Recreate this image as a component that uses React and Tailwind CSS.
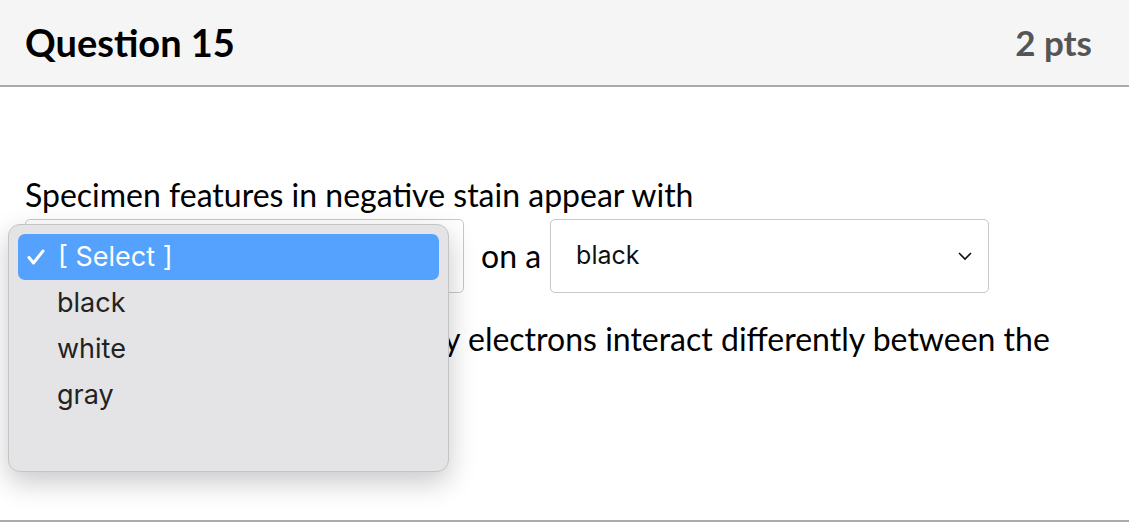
const lato = { fontFamily: '"Lato", "Open Sans", sans-serif' };
const sys = { fontFamily: '"Inter", "Liberation Sans", sans-serif' };

function Chevron() {
    return (
        <svg width="14" height="9" viewBox="0 0 14 9" fill="none">
            <path d="M1 1l6 6 6-6" stroke="#111" strokeWidth="1.6" />
        </svg>
    );
}

function FakeSelect({ value }) {
    return (
        <div className="w-[439px] h-[74px] border border-[#c8c8c8] rounded-[5px] bg-white flex items-center justify-between pl-[25px] pr-[16px]">
            <span className="text-[25px] text-[#111]" style={sys}>{value}</span>
            <Chevron />
        </div>
    );
}

function Popup() {
    const items = ["black", "white", "gray"];
    return (
        <div
            className="absolute left-[8px] top-[224px] w-[441px] h-[248px] bg-[#e4e4e6] border border-[#c4c4c6] rounded-[12px] shadow-[0_10px_28px_rgba(0,0,0,0.22)] p-[9px]"
            style={sys}
        >
            <div className="h-[46px] rounded-[7px] bg-[#54a2fd] flex items-center text-white text-[27px] pl-[9px]">
                <svg className="mr-[13px]" width="18" height="16" viewBox="0 0 18 16" fill="none">
                    <path d="M2 8.5l4.5 5.5L16 2" stroke="white" strokeWidth="3" strokeLinecap="round" strokeLinejoin="round" />
                </svg>
                <span>[ Select ]</span>
            </div>
            {items.map((item) => (
                <div key={item} className="h-[46px] flex items-center pl-[39px] text-[27px] text-[#222]">
                    {item}
                </div>
            ))}
        </div>
    );
}

export default function App() {
    return (
        <div className="relative w-[1129px] h-[526px] bg-white overflow-hidden" style={lato}>
            <div className="h-[87px] bg-[#f5f5f5] border-b-2 border-[#aaaaaa] flex items-center justify-between pl-[25px] pr-[37px]">
                <h2 className="text-[38px] font-bold text-black">Question 15</h2>
                <span className="text-[35px] font-bold text-[#555]">2 pts</span>
            </div>
            <div className="h-[435px] border-b-2 border-[#aaaaaa] pt-[89px] pl-[25px]">
                <p className="text-[32px] leading-[38px] text-black">Specimen features in negative stain appear with</p>
                <div className="flex items-center mt-[5px]">
                    <FakeSelect value="[ Select ]" />
                    <span className="text-[32px] text-black ml-[17px] mr-[9px]">on a</span>
                    <FakeSelect value="black" />
                </div>
                <p className="text-[32px] leading-[38px] text-black mt-[27px]">
                    backgrounds, since the primary electrons interact differently between the
                </p>
            </div>
            <Popup />
        </div>
    );
}
